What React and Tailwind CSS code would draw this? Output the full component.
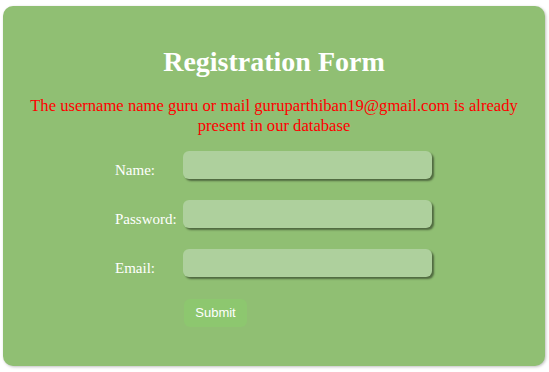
export default function App() {
  const fields = [
    { label: "Name:", type: "text" },
    { label: "Password:", type: "password" },
    { label: "Email:", type: "email" },
  ];

  return (
    <div className="w-[549px] h-[372px] bg-white pt-[6px] pl-[3px]">
      <div
        className="w-[542px] h-[360px] rounded-[10px] bg-[#90bf73] shadow-[1px_1px_3px_rgba(0,0,0,0.25)] pt-[41px]"
        style={{ fontFamily: '"Liberation Serif", "Times New Roman", serif' }}
      >
        <h1 className="text-center text-white font-bold text-[28px] leading-[30px]">
          Registration Form
        </h1>
        <p className="mt-[19px] px-[16px] text-center text-[#ff0000] text-[16.6px] leading-[20px]">
          The username name guru or mail guruparthiban19@gmail.com is already present in our database
        </p>

        <form className="mt-[15px] pl-[112px] flex flex-col gap-[21px]">
          {fields.map((f) => (
            <div key={f.label} className="flex items-end">
              <label className="w-[68px] text-white text-[15px] leading-[17px]">
                {f.label}
              </label>
              <input
                type={f.type}
                className="w-[249px] h-[28px] rounded-[6px] bg-[#aed09d] shadow-[2px_2px_2px_rgba(0,0,0,0.45)] outline-none"
              />
            </div>
          ))}
          <div className="pl-[69px] pt-[1px]">
            <button
              type="button"
              className="w-[63px] h-[28px] rounded-[6px] bg-[#8dc76f] text-white text-[13px]"
              style={{ fontFamily: '"Liberation Sans", Arial, sans-serif' }}
            >
              Submit
            </button>
          </div>
        </form>
      </div>
    </div>
  );
}
